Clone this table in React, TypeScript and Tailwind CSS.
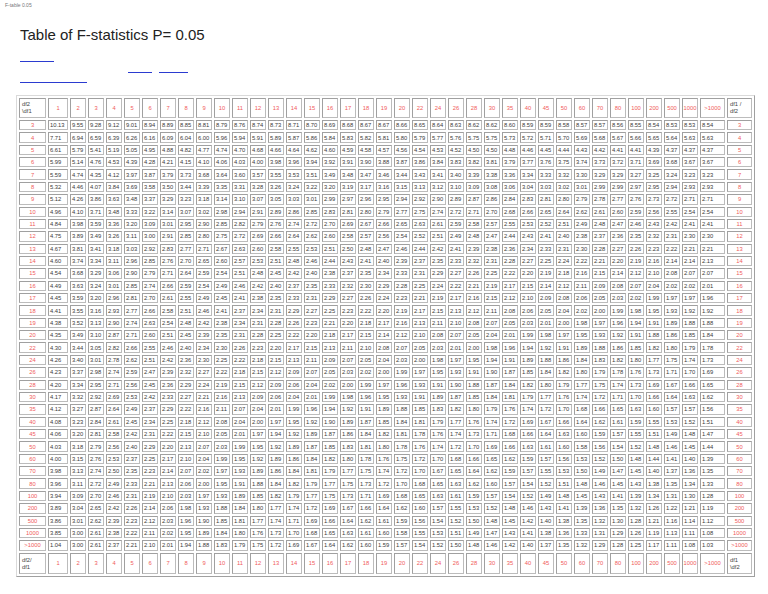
import React from 'react';

const rowLabels: (number | string)[] = [
  3, 4, 5, 6, 7, 8, 9, 10, 11, 12, 13, 14, 15, 16, 17, 18, 19, 20,
  22, 24, 26, 28, 30, 35, 40, 45, 50, 60, 70, 80, 100, 200, 500, 1000, '>1000',
];
const colLabels: (number | string)[] = [
  1, 2, 3, 4, 5, 6, 7, 8, 9, 10, 11, 12, 13, 14, 15, 16, 17, 18, 19, 20,
  22, 24, 26, 28, 30, 35, 40, 45, 50, 60, 70, 80, 100, 200, 500, 1000, '>1000',
];

// numeric helpers for the F quantile
const lgamma = (z: number): number => {
  const c = [
    0.99999999999980993, 676.5203681218851, -1259.1392167224028, 771.32342877765313,
    -176.61502916214059, 12.507343278686905, -0.13857109526572012, 9.9843695780195716e-6,
    1.5056327351493116e-7,
  ];
  if (z < 0.5) return Math.log(Math.PI / Math.sin(Math.PI * z)) - lgamma(1 - z);
  z -= 1;
  let x = c[0];
  for (let i = 1; i < 9; i++) x += c[i] / (z + i);
  const t = z + 7.5;
  return 0.5 * Math.log(2 * Math.PI) + (z + 0.5) * Math.log(t) - t + Math.log(x);
};

const betacf = (a: number, b: number, x: number) => {
  const FPMIN = 1e-300;
  const qab = a + b;
  const qap = a + 1;
  const qam = a - 1;
  let c = 1;
  let d = 1 - (qab * x) / qap;
  if (Math.abs(d) < FPMIN) d = FPMIN;
  d = 1 / d;
  let h = d;
  for (let m = 1; m <= 20000; m++) {
    const m2 = 2 * m;
    let aa = (m * (b - m) * x) / ((qam + m2) * (a + m2));
    d = 1 + aa * d;
    if (Math.abs(d) < FPMIN) d = FPMIN;
    c = 1 + aa / c;
    if (Math.abs(c) < FPMIN) c = FPMIN;
    d = 1 / d;
    h *= d * c;
    aa = (-(a + m) * (qab + m) * x) / ((a + m2) * (qap + m2));
    d = 1 + aa * d;
    if (Math.abs(d) < FPMIN) d = FPMIN;
    c = 1 + aa / c;
    if (Math.abs(c) < FPMIN) c = FPMIN;
    d = 1 / d;
    const del = d * c;
    h *= del;
    if (Math.abs(del - 1) < 1e-13) break;
  }
  return h;
};

const ibeta = (x: number, a: number, b: number) => {
  if (x <= 0) return 0;
  if (x >= 1) return 1;
  const bt = Math.exp(
    lgamma(a + b) - lgamma(a) - lgamma(b) + a * Math.log(x) + b * Math.log(1 - x),
  );
  if (x < (a + 1) / (a + b + 2)) return (bt * betacf(a, b, x)) / a;
  return 1 - (bt * betacf(b, a, 1 - x)) / b;
};

const fcrit = (d1: number, d2: number) => {
  let lo = 0;
  let hi = 30;
  for (let i = 0; i < 50; i++) {
    const mid = (lo + hi) / 2;
    const p = ibeta((d1 * mid) / (d1 * mid + d2), d1 / 2, d2 / 2);
    if (p < 0.95) lo = mid;
    else hi = mid;
  }
  return (lo + hi) / 2;
};

const toDf = (v: number | string) => (typeof v === 'number' ? v : 10000);

const table: string[][] = rowLabels.map((r) =>
  colLabels.map((c) => {
    if (r === '>1000' && c === 1) return '1.04';
    if (r === 3 && c === '>1000') return '8.54';
    return fcrit(toDf(c), toDf(r)).toFixed(2);
  }),
);

const cell = 'border border-[#bcbcbc] border-t-[#a0a0a0] border-l-[#a0a0a0] p-0';
const label = `${cell} text-center text-[#f05c5c]`;
const corner = `${cell} text-left align-top pl-[2px] pt-[2px] text-[#444] leading-[7px]`;

const App = () => {
  return (
    <div className="min-h-screen bg-white font-['Liberation_Sans',Arial,sans-serif] text-[#333]">
      <div className="pl-[5px] pt-[2px] text-[5px] leading-[6px] text-[#777]">F-table 0.05</div>

      <div className="pl-[20px]">
        <h1 className="mt-[18px] text-[15px] leading-[18px] font-normal text-[#222]">
          Table of F-statistics P= 0.05
        </h1>
        <a href="#" className="mt-[17px] block h-[1px] w-[34px] bg-[#2b3bd0]" />
        <div className="mt-[10px] flex">
          <a href="#" className="ml-[108px] block h-[1px] w-[24px] bg-[#2b3bd0]" />
          <a href="#" className="ml-[7px] block h-[1px] w-[29px] bg-[#2b3bd0]" />
        </div>
        <a href="#" className="mt-[9px] block h-[1px] w-[67px] bg-[#2b3bd0]" />
      </div>

      <table className="ml-[16px] mt-[12px] w-[739px] table-fixed border-separate border-spacing-[2px] border border-[#dadada] border-b-[#a0a0a0] border-r-[#a0a0a0] text-[5.8px]">
        <colgroup>
          <col className="w-[27px]" />
          <col className="w-[20px]" />
          {colLabels.slice(1, 36).map((c) => (
            <col key={String(c)} className="w-[16px]" />
          ))}
          <col className="w-[25px]" />
          <col className="w-[25px]" />
        </colgroup>
        <thead>
          <tr className="h-[20px]">
            <td className={corner}>
              df2
              <br />\df1
            </td>
            {colLabels.map((c) => (
              <td key={String(c)} className={label}>
                {c}
              </td>
            ))}
            <td className={corner}>
              df1 /
              <br />
              df2
            </td>
          </tr>
        </thead>
        <tbody>
          {rowLabels.map((r, i) => (
            <tr key={String(r)} className="h-[10.36px]">
              <td className={`${label} leading-[8px]`}>{r}</td>
              {table[i].map((v, j) => (
                <td key={j} className={`${cell} pl-[1px] leading-[8px] text-[#3a3a3a]`}>
                  {v}
                </td>
              ))}
              <td className={`${label} leading-[8px]`}>{r}</td>
            </tr>
          ))}
          <tr className="h-[21.5px]">
            <td className={`${corner} pt-[3px]`}>
              df2/
              <br />
              df1
            </td>
            {colLabels.map((c) => (
              <td key={String(c)} className={label}>
                {c}
              </td>
            ))}
            <td className={`${corner} pt-[3px]`}>
              df1
              <br />\df2
            </td>
          </tr>
        </tbody>
      </table>
    </div>
  );
};

export default App;
